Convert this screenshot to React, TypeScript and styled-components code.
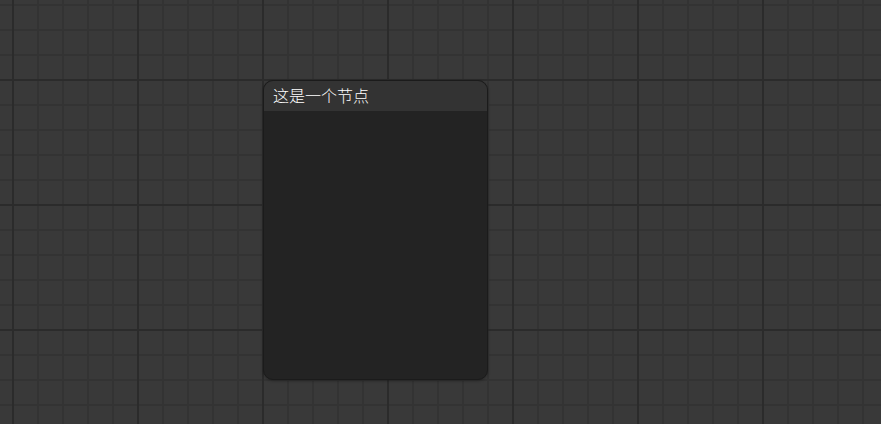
import React from "react";
import styled, { createGlobalStyle } from "styled-components";

const GlobalStyle = createGlobalStyle`
  html, body, #root {
    margin: 0;
    padding: 0;
    height: 100%;
  }
  body {
    font-family: "Noto Sans CJK SC", "Noto Sans", sans-serif;
    overflow: hidden;
  }
`;

const Canvas = styled.div`
  position: relative;
  width: 100%;
  height: 100vh;
  background-color: #393939;
  background-image:
    linear-gradient(to right, #2b2b2b 2px, transparent 2px),
    linear-gradient(to bottom, #2b2b2b 2px, transparent 2px),
    linear-gradient(to right, #333333 2px, transparent 2px),
    linear-gradient(to bottom, #333333 2px, transparent 2px);
  background-size: 125px 125px, 125px 125px, 25px 25px, 25px 25px;
  background-position: 12px 79px, 12px 79px, 12px 4px, 12px 4px;
`;

const Node = styled.div<{ $x: number; $y: number }>`
  position: absolute;
  left: ${(p) => p.$x}px;
  top: ${(p) => p.$y}px;
  width: 225px;
  height: 300px;
  box-sizing: border-box;
  display: flex;
  flex-direction: column;
  background: #232323;
  border: 1px solid #1b1b1b;
  border-radius: 10px;
  overflow: hidden;
  box-shadow: 0 1px 3px rgba(0, 0, 0, 0.3);
`;

const NodeHeader = styled.div`
  height: 30px;
  box-sizing: border-box;
  flex-shrink: 0;
  display: flex;
  align-items: center;
  padding: 0 9px 3px;
  background: #333333;
  color: #ffffff;
  font-size: 16px;
  font-weight: 300;
`;

const NodeBody = styled.div`
  flex: 1;
`;

export default function App() {
  return (
    <>
      <GlobalStyle />
      <Canvas>
        <Node $x={263} $y={80}>
          <NodeHeader>这是一个节点</NodeHeader>
          <NodeBody />
        </Node>
      </Canvas>
    </>
  );
}
